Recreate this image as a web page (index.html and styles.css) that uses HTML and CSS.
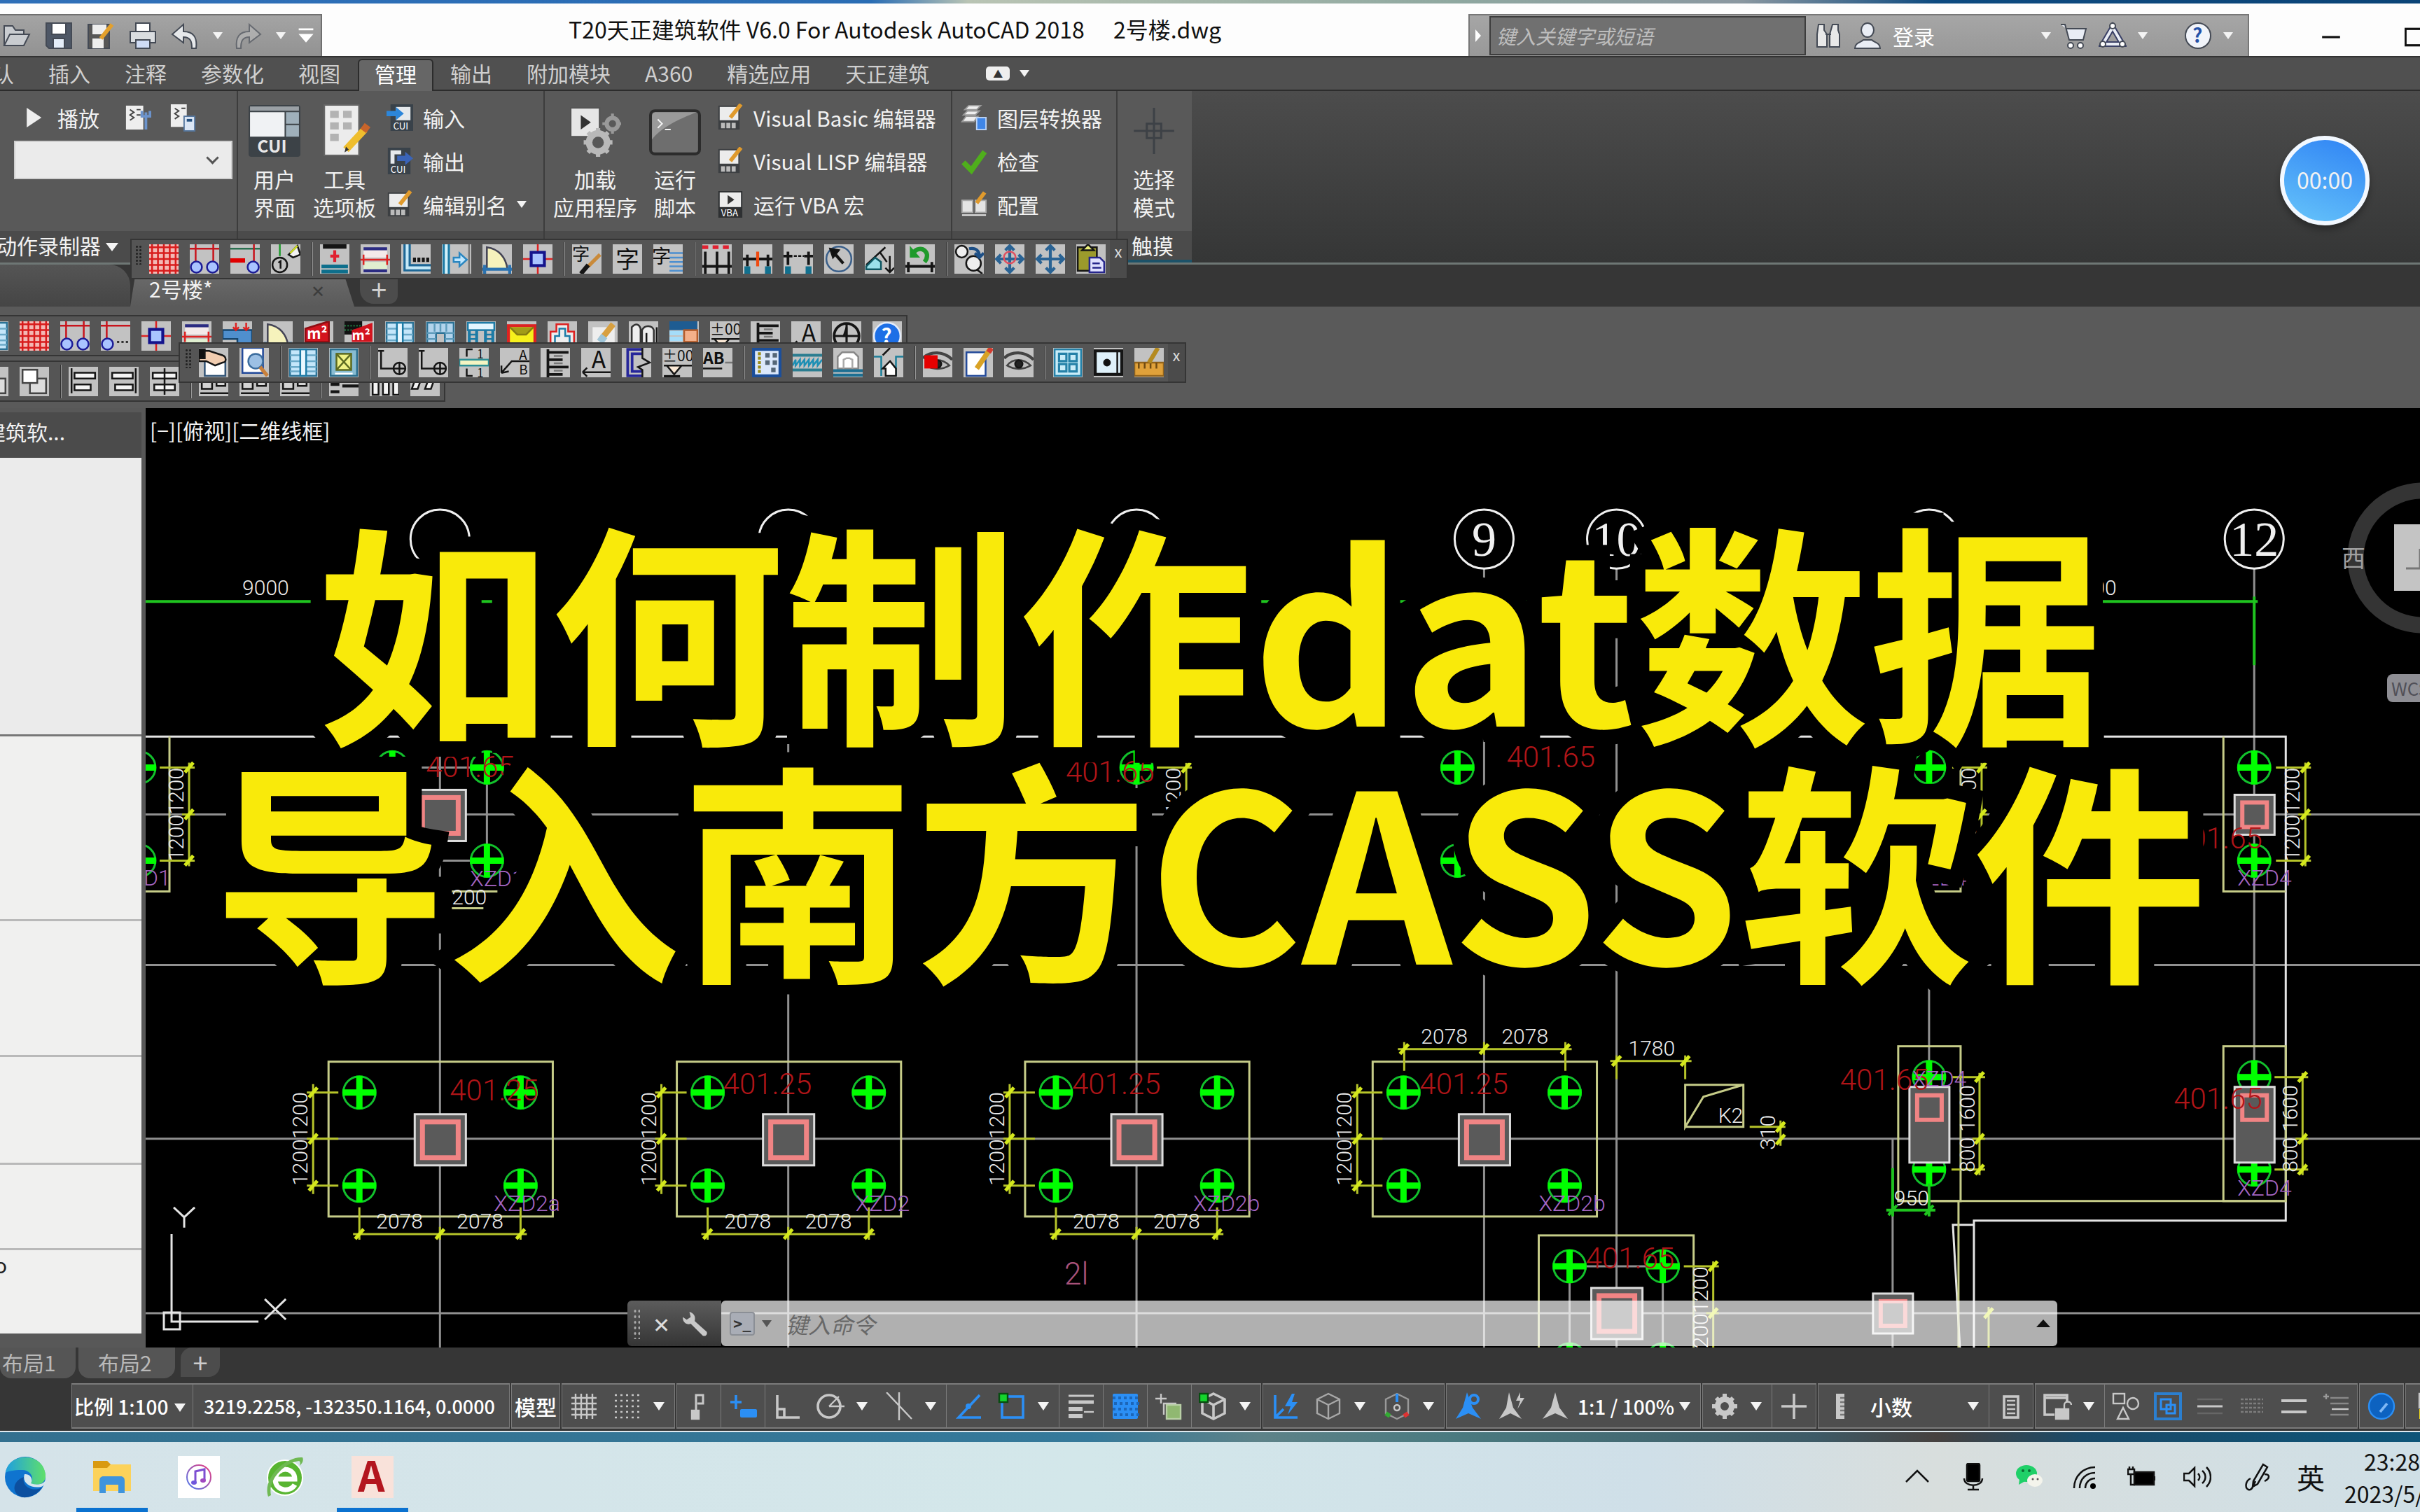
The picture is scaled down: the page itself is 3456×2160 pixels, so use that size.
FILE: index.html
```
<!DOCTYPE html>
<html lang="zh-CN">
<head>
    <meta charset="UTF-8">
    <meta name="viewport" content="width=device-width, initial-scale=1.0">
    <title>T20天正建筑软件 V6.0 - 2号楼.dwg</title>
    <link rel="stylesheet" href="styles.css">
</head>
<body>
    <!-- Icon sprite -->
    <svg class="sprite" aria-hidden="true">
        <symbol id="i-grid" viewBox="0 0 20 20"><rect width="20" height="20" fill="#f3b8b4" stroke="none"/><path d="M2 0v20M6 0v20M10 0v20M14 0v20M18 0v20M0 2h20M0 6h20M0 10h20M0 14h20M0 18h20" stroke="#d81c1c"/></symbol>
        <symbol id="i-pile2" viewBox="0 0 20 20"><path d="M0 3h20M4 0v12M16 0v12" stroke="#c8141c"/><g fill="#a9c4ff" stroke="#1c1c96"><circle cx="4.500" cy="15.500" r="3.800"/><circle cx="15.500" cy="15.500" r="3.800"/></g></symbol>
        <symbol id="i-pile1" viewBox="0 0 20 20"><path d="M0 3h20" stroke="#2a7050"/><path d="M16 0v12" stroke="#c8141c"/><path d="M0 11h10" stroke="#e00000" stroke-width="3"/><circle cx="15.500" cy="15.500" r="3.800" fill="#a9c4ff" stroke="#1c1c96"/></symbol>
        <symbol id="i-piledots" viewBox="0 0 20 20"><path d="M0 3h20M4 0v12" stroke="#c8141c"/><circle cx="4.500" cy="15.500" r="3.800" fill="#a9c4ff" stroke="#1c1c96"/><path d="M11 14h9" stroke-dasharray="1.500 1.500"/></symbol>
        <symbol id="i-axisnum" viewBox="0 0 20 20"><path d="M6 0v8" stroke="#1f9a2c"/><circle cx="6" cy="14" r="5"/><path d="M5 12.500l1.500-1v5"/><path d="M18 1l-6 6 3 2 5-2z" fill="#f2f2f2"/><path d="M18 1l-5 5" stroke="#cddc20"/></symbol>
        <symbol id="i-wallup" viewBox="0 0 20 20"><path d="M2 1.500h16" stroke-width="3"/><path d="M10 4v8M7 8h6" stroke="#e02030" stroke-width="2"/><path d="M1 15h18M1 18.500h18" stroke="#0e6f8c" stroke-width="2.500"/></symbol>
        <symbol id="i-dimwall" viewBox="0 0 20 20"><rect x="2" y="4" width="16" height="5" fill="#f4eaea" stroke="none"/><rect x="2" y="12" width="16" height="5" fill="#e0efd0" stroke="none"/><path d="M2 3h16M2 18h16" stroke="#2b2b82" stroke-width="2"/><path d="M0 10.500h20M2 7v7M18 7v7" stroke="#d22"/></symbol>
        <symbol id="i-corner" viewBox="0 0 20 20"><path d="M4 0v16h16" stroke="#1d6796" stroke-width="5"/><path d="M4 0v16h16" stroke="#c5e9f8" stroke-width="2"/><path d="M8 10.500h12" stroke-width="3" stroke-dasharray="2 1"/></symbol>
        <symbol id="i-wallright" viewBox="0 0 20 20"><path d="M3 0v20" stroke="#1d7ba6" stroke-width="5"/><path d="M3 0v20" stroke="#d3f1fa" stroke-width="2"/><path d="M8 9h4V6l5 4.500-5 4.500v-3H8z" fill="#bfe7ff" stroke="#2a86c0"/><path d="M18.500 0v20" stroke="#777"/></symbol>
        <symbol id="i-door" viewBox="0 0 20 20"><path d="M3 17V2c8 1 13 7 14 15z" fill="#f6f2bc" stroke="#445"/><path d="M0 17h20M1.500 14v6M18.500 14v6" stroke="#2a72b0" stroke-width="2"/></symbol>
        <symbol id="i-column" viewBox="0 0 20 20"><path d="M10 0v20M0 10h20" stroke="#d22"/><rect x="5.500" y="5.500" width="9" height="9" fill="#a9c4ff" stroke="#14148c" stroke-width="2"/></symbol>
        <symbol id="i-textbrush" viewBox="0 0 20 20"><text x="0" y="11" font-size="12">字</text><path d="M19 7l-8 8" stroke="#c98a3a" stroke-width="2.500"/><path d="M11 14l-5 6" stroke-width="3"/></symbol>
        <symbol id="i-text" viewBox="0 0 20 20"><text x="2" y="16" font-size="16">字</text></symbol>
        <symbol id="i-textlines" viewBox="0 0 20 20"><path d="M11 6h9M11 9h9M11 12h9M11 15h9M11 18h9" stroke="#4c8fd0"/><text x="-1" y="13" font-size="13">字</text></symbol>
        <symbol id="i-dima" viewBox="0 0 20 20"><path d="M0 2h20" stroke="#e02030" stroke-width="2.500" stroke-dasharray="4 3"/><path d="M2 5v15M10 5v15M18 5v15M0 15h20" stroke-width="1.800"/></symbol>
        <symbol id="i-dimb" viewBox="0 0 20 20"><path d="M0 10h20M3 7v8M17 7v8" stroke-width="1.800"/><path d="M10 5v10" stroke="#f04a10" stroke-width="2"/><path d="M3 15v5M17 15v5" stroke="#12708e" stroke-width="4"/></symbol>
        <symbol id="i-dimc" viewBox="0 0 20 20"><path d="M0 8h6M14 8h6M3 5v9M17 5v9" stroke-width="1.800"/><path d="M7 8h7" stroke-dasharray="2 1"/><path d="M3 15v5M17 15v5" stroke="#12708e" stroke-width="4"/></symbol>
        <symbol id="i-dimcircle" viewBox="0 0 20 20"><circle cx="10" cy="10" r="8.500" stroke="#3a5f8a"/><path d="M13 13L6 5" stroke-width="2"/><path d="M4 3l6 1-4 5z" fill="#111"/></symbol>
        <symbol id="i-slope" viewBox="0 0 20 20"><path d="M1 14L14 2M10 5l5 7"/><path d="M1 15l6-6 4 3v5H1z" fill="#9be0ea" stroke="#0f5762"/><path d="M17 8v11M14 16l3 3 3-3"/></symbol>
        <symbol id="i-undo" viewBox="0 0 20 20"><path d="M0 15h20M2 12v7M18 12v7" stroke-width="1.800"/><path d="M6 5c5-5 12 1 7 7" stroke="#1f9a2c" stroke-width="3"/><path d="M3 1v8h7z" fill="#1f9a2c" stroke="none"/></symbol>
        <symbol id="i-swap" viewBox="0 0 20 20"><circle cx="5" cy="5" r="4" fill="#eee"/><circle cx="13" cy="13" r="5" fill="#eee"/><path d="M10 3c5-1 7 2 7 5M14 6l3 3 3-3" stroke="#1d4f86" stroke-width="2"/><path d="M15 17l4 3"/></symbol>
        <symbol id="i-move" viewBox="0 0 20 20"><path d="M10 2v16M2 10h16M7 4l3-3 3 3M7 16l3 3 3-3M4 7l-3 3 3 3M16 7l3 3-3 3" stroke="#2a6394" stroke-width="2"/></symbol>
        <symbol id="i-movered" viewBox="0 0 20 20"><path d="M10 2v16M2 10h16M7 4l3-3 3 3M7 16l3 3 3-3M4 7l-3 3 3 3M16 7l3 3-3 3" stroke="#2a6394" stroke-width="2"/><circle cx="10" cy="9" r="4" stroke="#e05060"/></symbol>
        <symbol id="i-paste" viewBox="0 0 20 20"><rect x="1" y="2" width="13" height="16" fill="#9c9a2c"/><path d="M4 4l4-4 4 4z" fill="#eef27a"/><path d="M9 9h7l3 3v7H9z" fill="#dfe0ff" stroke="#26268c"/><path d="M11 13h5M11 16h6" stroke="#26268c"/></symbol>
        <symbol id="i-layers" viewBox="0 0 20 20"><rect x="7" y="8" width="11" height="10" fill="#ddd" stroke="#444"/><rect x="2" y="2" width="10" height="9" fill="#fff" stroke="#444"/></symbol>
        <symbol id="i-wall2" viewBox="0 0 20 20"><path d="M0 6h20v12H10v-6H0z" fill="#4f8fce" stroke="#17466e"/><path d="M9 1v5M16 1v5M7 4l2 2 2-2M14 4l2 2 2-2" stroke="#d22"/></symbol>
        <symbol id="i-m2" viewBox="0 0 20 20"><path d="M1 5L17 0v14H1z" fill="#d3141e" stroke="#8e0d12"/><text class="w" x="2" y="12" font-size="10" font-weight="700">m²</text></symbol>
        <symbol id="i-m2d" viewBox="0 0 20 20"><rect width="12" height="9" fill="#111" stroke="none"/><path d="M0 3h12M0 6h12" stroke="#1c6a38" stroke-dasharray="1 1"/><path d="M5 6l14-5v13H5z" fill="#d3141e" stroke="none"/><text class="w" x="5" y="13" font-size="9" font-weight="700">m²</text></symbol>
        <symbol id="i-stairs" viewBox="0 0 20 20"><rect x="1" y="1" width="18" height="18" fill="#c4e6fa" stroke="#2b7296"/><path d="M1 5h18M1 9h18M1 13h18M1 16h18" stroke="#6aa9c8"/><rect x="8" y="1" width="4" height="18" fill="#eaf8ff" stroke="#1d7ba6"/></symbol>
        <symbol id="i-stairu" viewBox="0 0 20 20"><path d="M1 20V1h18v19h-6V8H7v12z" fill="#b2d4ec" stroke="#2b7296"/><path d="M1 8h6M1 12h6M1 16h6M13 8h6M13 12h6M13 16h6M6 1v6M10 1v6M14 1v6" stroke="#5f9cbc"/></symbol>
        <symbol id="i-stair3" viewBox="0 0 20 20"><rect x="1" y="1" width="18" height="5" fill="#e3f6ff" stroke="#1d7ba6"/><path d="M2 6v14M7 6v14M13 6v14M18 6v14" stroke="#1d7ba6" stroke-width="2"/><path d="M2 9h5M2 12h5M13 9h5M13 12h5" stroke="#1d7ba6"/></symbol>
        <symbol id="i-roof" viewBox="0 0 20 20"><rect x="1" y="3" width="18" height="15" fill="#f6f01c" stroke="#d22" stroke-width="2"/><path d="M2 4l5 5h6l5-5" fill="#a29c18" stroke="#857c10"/></symbol>
        <symbol id="i-footprint" viewBox="0 0 20 20"><path d="M6 2h8v5h4v11H2V7h4z" stroke="#d22" fill="#eee"/><path d="M8 5h4v5h3v6H5v-6h3z" stroke="#1d7ba6"/></symbol>
        <symbol id="i-eraser" viewBox="0 0 20 20"><rect x="3" y="4" width="15" height="14" fill="#eee" stroke="none"/><path d="M17 2L9 12" stroke="#d8a040" stroke-width="4"/><path d="M11 10l-3 4" stroke="#9fc5d8" stroke-width="5"/></symbol>
        <symbol id="i-books" viewBox="0 0 20 20"><path d="M2 4c3-3 5-2 6 1v14H2zM9 6c2-4 7-3 8 0v13H9z" fill="#eee" stroke="#333"/><path d="M12 8v9M19 4v15"/></symbol>
        <symbol id="i-table" viewBox="0 0 20 20"><rect width="19" height="6" fill="#1e5c92" stroke="none"/><path d="M0 8h9M0 12h9M0 16h9" stroke="#a5ddfa" stroke-width="3"/><rect x="10" y="6" width="9" height="8" fill="#f3b08a" stroke="#b35d2c"/></symbol>
        <symbol id="i-level" viewBox="0 0 20 20"><text x="0" y="9" font-size="10">±00</text><path d="M1 12h19M3 12l5 6 5-6z" fill="#fbe9d6"/><path d="M1 19.500h11" stroke-width="2"/></symbol>
        <symbol id="i-scalee" viewBox="0 0 20 20"><path d="M5 1v19M5 3h14M5 8h10M5 13h14M5 18h10" stroke-width="1.800"/><path d="M9 5.500h6M9 10.500h6M9 15.500h6" stroke="#777"/></symbol>
        <symbol id="i-leadera" viewBox="0 0 20 20"><text x="7" y="14" font-size="16">A</text><path d="M1 16.500h19M1 16.500l3-3M1 16.500l3 3"/></symbol>
        <symbol id="i-compass" viewBox="0 0 20 20"><circle cx="10" cy="10" r="8.500" stroke-width="1.800"/><path d="M10 1v18M2 10h16" stroke-width="1.500"/><path d="M10 4l-2 6h2z" fill="#222"/></symbol>
        <symbol id="i-help" viewBox="0 0 20 20"><circle cx="10" cy="10" r="9" fill="#1d6fe6" stroke="#e4ecfa"/><text class="w" x="6" y="15" font-size="14" font-weight="700">?</text></symbol>
        <symbol id="i-hand" viewBox="0 0 20 20"><rect x="4" y="9" width="14" height="10" fill="#fff" stroke="#357"/><path d="M0 2h7l9 3c3 1 3 5 0 5l-5 2-6-3H0z" fill="#f1cdb0"/><path d="M0 1h4v6H0z" fill="#111"/></symbol>
        <symbol id="i-find" viewBox="0 0 20 20"><rect x="2" y="0" width="14" height="17" fill="#fff" stroke="#234a9a"/><circle cx="11" cy="9" r="5" fill="#9cc0e4" stroke="#3c6d9e"/><path d="M14 13l5 6" stroke="#c9813c" stroke-width="2.500"/></symbol>
        <symbol id="i-lift" viewBox="0 0 20 20"><rect x="1" y="1" width="18" height="18" fill="#88bcd2" stroke="#2a6e8e"/><rect x="5" y="4" width="10" height="11" fill="#f0f386" stroke="#5c6a20"/><path d="M5 4l10 11M15 4L5 15" stroke="#5c6a20"/><path d="M4 17.500h12" stroke="#fff"/></symbol>
        <symbol id="i-leadc" viewBox="0 0 20 20"><path d="M2 2v12h9M0 2h4"/><circle cx="14.500" cy="14" r="4"/><path d="M10 14h9M14.500 10v8"/></symbol>
        <symbol id="i-section" viewBox="0 0 20 20"><rect x="0" y="8" width="20" height="4" fill="#f5f5c2" stroke="#2c8f96"/><path d="M5 6V1h4M5 14v5h4"/><text x="12" y="7" font-size="8">1</text><text x="12" y="20" font-size="8">1</text></symbol>
        <symbol id="i-ab" viewBox="0 0 20 20"><path d="M1 17L8 9h12M1 17v-5M1 17l5-1"/><text x="13" y="8" font-size="9">A</text><text x="13" y="18" font-size="9">B</text></symbol>
        <symbol id="i-break" viewBox="0 0 20 20"><path d="M14 1H4v18h10M14 4H7v12h7" stroke="#26269a" stroke-width="1.800"/><path d="M14 0v7l5 3-8 3 3 2v5"/></symbol>
        <symbol id="i-abt" viewBox="0 0 20 20"><text x="0" y="11" font-size="11" font-weight="700">AB</text><path d="M0 14h13"/><path d="M15 10h5" stroke="#777"/></symbol>
        <symbol id="i-panel" viewBox="0 0 20 20"><rect x="1" y="1" width="18" height="18" fill="#dbe8fb" stroke="#1c4f9a" stroke-width="2"/><path d="M5 3v14" stroke="#9a8c16" stroke-width="2" stroke-dasharray="2 1"/><path d="M9 5h3M14 5h3M9 10h3M14 10h3M13 15h3" stroke="#567" stroke-width="3"/></symbol>
        <symbol id="i-wave" viewBox="0 0 20 20"><path d="M0 5h20M0 15h20" stroke="#2b7d90" stroke-width="2"/><path d="M0 12l2-4v4l3-4v4l3-4v4l3-4v4l3-4v4l3-4v4l3-4" stroke="#1d8fb4"/></symbol>
        <symbol id="i-wc" viewBox="0 0 20 20"><path d="M3 14V6l3-3h8l3 3v8z" fill="#fff" stroke="#888"/><path d="M7 14V8l2-1h2l2 1v6" stroke="#aaa"/><path d="M0 15.500h20M0 18.500h20" stroke="#1c6f92" stroke-width="2"/></symbol>
        <symbol id="i-hut" viewBox="0 0 20 20"><path d="M0 6h5v13M20 6h-5v13" stroke="#1c7f9a"/><path d="M6 5l5-5"/><path d="M6 14l5-5 4 5v5H8v-5z" fill="#fff"/></symbol>
        <symbol id="i-eye" viewBox="0 0 20 20"><path d="M0 7C5 2 14 2 20 8" stroke="#444" stroke-width="2"/><path d="M2 12c4-5 11-5 16 0-5 3-11 3-16 0z" fill="#bbb" stroke="#444"/><circle cx="10" cy="11" r="2.500" fill="#222"/></symbol>
        <symbol id="i-note" viewBox="0 0 20 20"><rect x="2" y="3" width="13" height="16" fill="#fff" stroke="#234a9a"/><path d="M18 1L9 14" stroke="#d9a226" stroke-width="3.500"/><path d="M19 0l-2 3" stroke="#d43c30" stroke-width="3.500"/></symbol>
        <symbol id="i-win4" viewBox="0 0 20 20"><rect x="1" y="1" width="18" height="18" fill="#c9ecf8" stroke="#2581a8"/><path d="M4 4h5v5H4zM11 4h5v5h-5zM4 11h5v5H4zM11 11h5v5h-5z" stroke="#2581a8" stroke-width="1.500"/></symbol>
        <symbol id="i-sheet" viewBox="0 0 20 20"><rect x="1" y="2" width="18" height="16" fill="#dff1fa" stroke-width="2"/><path d="M16 2v16"/><circle cx="9" cy="10" r="2" fill="#111"/></symbol>
        <symbol id="i-ruler" viewBox="0 0 20 20"><path d="M0 10h20v9H0z" fill="#e0a13a" stroke="#94641a"/><path d="M3 10v4M7 10v4M11 10v4M15 10v4" stroke="#704b12"/><path d="M16 0l-6 10" stroke="#b48a20" stroke-width="3"/></symbol>
        <symbol id="i-aleft" viewBox="0 0 20 20"><path d="M2 1v17"/><path d="M4 4h14v4H4zM4 12h11v4H4z" fill="#f4f4f4"/></symbol>
        <symbol id="i-aright" viewBox="0 0 20 20"><path d="M18 1v17"/><path d="M2 4h14v4H2zM4 12h12v4H4z" fill="#f4f4f4"/></symbol>
        <symbol id="i-acenter" viewBox="0 0 20 20"><path d="M2 4h16v4H2zM3 12h14v4H3z" fill="#f4f4f4"/><path d="M10 1v18"/></symbol>
        <symbol id="i-abase" viewBox="0 0 20 20"><path d="M1 18h19"/><path d="M2 5h7v10H2zM12 5h6v8h-6z" fill="#d4d4d4"/></symbol>
        <symbol id="i-alist" viewBox="0 0 20 20"><path d="M1 6h6M1 12h6M1 17h6M9 13h11" stroke-width="2"/></symbol>
        <symbol id="i-acols" viewBox="0 0 20 20"><path d="M2 1v18h4V1zM9 1v18h4V1zM16 1v18h4V1z" fill="#f4f4f4"/></symbol>
        <symbol id="i-aslant" viewBox="0 0 20 20"><path d="M1 15l5-14h4L5 15zM10 15l5-14h4l-5 14z" fill="#f4f4f4"/></symbol>
        <!-- small ribbon glyphs -->
        <symbol id="i-cuiin" viewBox="0 0 20 20"><rect x="3" width="17" height="20" fill="#39424a" stroke="none"/><rect x="7" y="2" width="11" height="10" fill="#e5e9ec" stroke="none"/><path d="M0 5h7V2l6 5-6 5V9H0z" fill="#2c86da" stroke="none"/><text class="w" x="5" y="19" font-size="7">CUI</text></symbol>
        <symbol id="i-cuiout" viewBox="0 0 20 20"><rect x="1" width="17" height="20" fill="#39424a" stroke="none"/><path d="M3 2h8v3H6v7H3z" fill="#e5e9ec" stroke="none"/><path d="M8 6h6V3l6 5-6 5v-3H8z" fill="#3a64b8" stroke="none"/><text class="w" x="3" y="19" font-size="7">CUI</text></symbol>
        <symbol id="i-script" viewBox="0 0 20 20"><rect x="1" y="1" width="16" height="18" fill="#3c3f42" stroke="none"/><rect x="2" y="2" width="14" height="10" fill="#ececec" stroke="none"/><path d="M18 0l-8 10" stroke="#e09a2c" stroke-width="3"/><path d="M3 16h12" stroke="#bbb" stroke-width="4" stroke-dasharray="3 1"/></symbol>
        <symbol id="i-vba" viewBox="0 0 20 20"><rect x="1" width="18" height="20" fill="#2e3032" stroke="none"/><rect x="2" y="1" width="16" height="11" fill="#ececec" stroke="none"/><path d="M8 3v7l5-3.500z" fill="#333" stroke="none"/><text class="w" x="3" y="19" font-size="7">VBA</text></symbol>
        <symbol id="i-conv" viewBox="0 0 20 20"><path d="M3 4l3-3h9l-3 3zM2 8l3-3h9l-3 3zM1 13l3-4h9l-3 4z" fill="#eee" stroke="#999"/><rect x="12" y="10" width="7" height="9" fill="#3f86e8" stroke="#bcd4f6"/></symbol>
        <symbol id="i-check" viewBox="0 0 20 20"><path d="M2 11l6 6L18 3" stroke="#4fae1c" stroke-width="4"/></symbol>
        <symbol id="i-config" viewBox="0 0 20 20"><path d="M1 7h8v9H1zM11 7h8v9h-8z" fill="#e4e4e4" stroke="#aaa"/><path d="M18 1l-6 8" stroke="#e09a2c" stroke-width="3"/><path d="M1 18h18" stroke="#eee"/></symbol>
        <symbol id="i-pref" viewBox="0 0 20 20"><rect x="1" y="1" width="13" height="18" fill="#eee" stroke="none"/><path d="M4 4l3 2-3 2 3 2-3 2M9 4h3M9 8h3" stroke="#444"/><path d="M16 6v13M13 5v4h6V5" stroke="#6b93cc" stroke-width="2"/></symbol>
        <symbol id="i-calcsheet" viewBox="0 0 20 20"><rect x="1" y="0" width="12" height="17" fill="#eee" stroke="none"/><path d="M4 3l3 2-3 2 3 2-3 2M9 3h3" stroke="#444"/><rect x="11" y="9" width="8" height="11" fill="#dbe6f5" stroke="#56779f"/><path d="M13 12h4" stroke="#25507f" stroke-width="2"/></symbol>
        <!-- status bar glyphs -->
        <symbol id="s-grid" viewBox="0 0 20 20"><path d="M4 1v18M8 1v18M12 1v18M16 1v18M1 4h18M1 8h18M1 12h18M1 16h18"/></symbol>
        <symbol id="s-dots" viewBox="0 0 20 20"><path d="M1 2h18M1 6h18M1 10h18M1 14h18M1 18h18" stroke-dasharray="1.500 2.500"/></symbol>
        <symbol id="s-infer" viewBox="0 0 20 20"><path d="M8 14V2h5v6h-4" stroke-width="1.500"/><rect x="5" y="13" width="5" height="6" fill="#c8c8c8"/></symbol>
        <symbol id="s-dyn" viewBox="0 0 20 20"><path d="M5 2v10M1 7h8" stroke="#2b8ff5" stroke-width="1.800"/><rect x="8" y="12" width="12" height="6" rx="1" fill="#2b8ff5" stroke="none"/></symbol>
        <symbol id="s-ortho" viewBox="0 0 20 20"><path d="M3 2v16h16M3 12h5v6" stroke-width="1.800"/></symbol>
        <symbol id="s-polar" viewBox="0 0 20 20"><circle cx="9" cy="10" r="8" stroke-width="1.800"/><path d="M9 10h11M9 10l7-7"/></symbol>
        <symbol id="s-iso" viewBox="0 0 20 20"><path d="M10 -1v22M1 0l18 19"/></symbol>
        <symbol id="s-track" viewBox="0 0 20 20"><path d="M18 2L3 18h16" stroke="#2b8ff5" stroke-width="1.800"/><circle cx="10" cy="10" r="2" fill="#2b8ff5" stroke="none"/></symbol>
        <symbol id="s-snap" viewBox="0 0 20 20"><rect x="3" y="3" width="15" height="15" stroke="#2b8ff5" stroke-width="1.800"/><rect x="1" y="1" width="6" height="6" fill="#14d62c" stroke="#074d10"/></symbol>
        <symbol id="s-lwt" viewBox="0 0 20 20"><path d="M1 2.500h18" stroke-width="1.500"/><path d="M1 7h18" stroke-width="2.500"/><path d="M1 12h10M1 17h10" stroke-width="3"/><path d="M12 14h7"/></symbol>
        <symbol id="s-trans" viewBox="0 0 20 20"><rect x="1" y="1" width="18" height="18" rx="1" fill="#2b8ff5" stroke="none"/><path d="M1 4h18M2 8h18M1 12h18M2 16h18" stroke="#1c66b8" stroke-width="2" stroke-dasharray="2 2"/></symbol>
        <symbol id="s-cycle" viewBox="0 0 20 20"><path d="M4 1v7M0 4.500h8M6 16V8h9"/><rect x="8" y="9" width="10" height="10" fill="#90b871" stroke="#b9cfa6"/></symbol>
        <symbol id="s-cube" viewBox="0 0 20 20"><path d="M10 1l8 4v10l-8 4-8-4V5zM2 5l8 4 8-4M10 9v10" stroke="#a8a8a8" stroke-width="1.200"/></symbol>
        <symbol id="s-cubes" viewBox="0 0 20 20"><path d="M10 1l8 4v10l-8 4-8-4V5zM2 5l8 4 8-4M10 9v10" stroke-width="1.800"/><rect x="0" y="1" width="6" height="6" fill="#14d62c" stroke="#074d10"/></symbol>
        <symbol id="s-ucs" viewBox="0 0 20 20"><path d="M3 2v16h16M3 18l6-6" stroke="#2b8ff5" stroke-width="1.800"/><path d="M15 1l-5 9h4l-2 6 7-9h-4l2-6z" fill="#2b8ff5" stroke="none"/></symbol>
        <symbol id="s-gizmo" viewBox="0 0 20 20"><path d="M10 1l8 4v10l-8 4-8-4V5z" stroke="#999"/><path d="M10 1v6" stroke="#2b8ff5" stroke-width="2"/><path d="M2 15l3 2" stroke="#3a3" stroke-width="3"/><path d="M18 15l-3 2" stroke="#d33" stroke-width="3"/><circle cx="10" cy="11" r="2"/></symbol>
        <symbol id="s-ann" viewBox="0 0 20 20"><path d="M10 0l3 11 6 8-9-4-9 4 6-8z" fill="#c8c8c8" stroke="none"/></symbol>
        <symbol id="s-annvis" viewBox="0 0 20 20"><path d="M9 0l4 11 6 8-9-4-9 4 5-8z" fill="#2b8ff5" stroke="none"/><circle cx="14" cy="5" r="3" stroke="#2b8ff5" stroke-width="2"/></symbol>
        <symbol id="s-annauto" viewBox="0 0 20 20"><path d="M8 0l3 11 6 8-8-4-8 4 5-8z" fill="#c8c8c8" stroke="none"/><path d="M16 0l-3 6h3l-2 6 5-8h-3z" fill="#c8c8c8" stroke="none"/></symbol>
        <symbol id="s-gear" viewBox="0 0 20 20"><circle cx="10" cy="10" r="5" stroke-width="4"/><path d="M10 1v4M10 15v4M1 10h4M15 10h4M4 4l2.500 2.500M13.500 13.500L16 16M16 4l-2.500 2.500M6.500 13.500L4 16" stroke-width="3"/></symbol>
        <symbol id="s-plus" viewBox="0 0 20 20"><path d="M10 1v18M1 10h18" stroke-width="1.800"/></symbol>
        <symbol id="s-rule" viewBox="0 0 20 20"><rect x="7" y="1" width="6" height="18" fill="#c8c8c8" stroke="none"/><path d="M10 4h3M10 7h3M10 10h3M10 13h3M10 16h3" stroke="#777"/></symbol>
        <symbol id="s-calc" viewBox="0 0 20 20"><rect x="5" y="3" width="10" height="15" stroke-width="1.800"/><path d="M7 6h6M7 9h6M7 12h6M7 15h6"/></symbol>
        <symbol id="s-lock" viewBox="0 0 20 20"><path d="M8 16H1V2h16v5M1 4h16" stroke-width="1.800"/><rect x="9" y="12" width="9" height="7" fill="#c8c8c8"/><path d="M15 12V9c0-3 5-3 5 0"/></symbol>
        <symbol id="s-shapes" viewBox="0 0 20 20"><rect x="1" y="1" width="8" height="7"/><circle cx="15" cy="8" r="4"/><path d="M8 11l4 8H4z"/></symbol>
        <symbol id="s-hw" viewBox="0 0 20 20"><rect x="1" y="1" width="18" height="18" stroke="#2b7fd0" stroke-width="2"/><path d="M5 5h7v7H5zM9 9h6v6H9z" stroke="#2b8ff5" stroke-width="1.500"/></symbol>
        <symbol id="s-line1" viewBox="0 0 20 20"><path d="M1 5h18M1 15h18" stroke="#666"/><path d="M1 10h18" stroke-width="1.500"/></symbol>
        <symbol id="s-hatch" viewBox="0 0 20 20"><path d="M2 5h16M2 8h16M2 11h16M2 14h16" stroke="#7d7d7d" stroke-dasharray="2 1"/></symbol>
        <symbol id="s-line2" viewBox="0 0 20 20"><path d="M1 6h18M1 14h18" stroke-width="2"/></symbol>
        <symbol id="s-line3" viewBox="0 0 20 20"><path d="M6 4h13M6 8h13M6 16h13" stroke="#888"/><path d="M7 12h12"/><path d="M3 1v4M1 3h4" stroke="#999"/></symbol>
        <symbol id="s-perf" viewBox="0 0 20 20"><circle cx="10" cy="10" r="9" fill="#0d62c0" stroke="#2b8ff5"/><path d="M9 14l5-6" stroke="#7fb8f5" stroke-width="1.800"/></symbol>
        <symbol id="s-msg" viewBox="0 0 20 20"><path d="M4 1h12v10H4z" fill="#eee"/><path d="M4 12h14v7H4z" fill="#f2dc1c" stroke="none"/></symbol>
    </svg>

    <div class="desktop-edge"></div>

    <header class="titlebar">
        <div class="quick-access">
            <button class="qa" aria-label="打开"><svg viewBox="0 0 20 20"><path d="M1 17V3h6l2 3h6v3M1 17l4-8h14l-4 8z" fill="#c9ccd0"/></svg></button>
            <button class="qa" aria-label="保存"><svg viewBox="0 0 20 20"><path d="M1 1h18v18H3l-2-2z" fill="#4e5766"/><path d="M5 1h10v8H5z" fill="#fff"/><path d="M6 12h8v7H6z" fill="#e5eefa"/></svg></button>
            <button class="qa" aria-label="另存为"><svg viewBox="0 0 20 20"><path d="M1 2h15v17H1z" fill="#575757"/><path d="M4 2h10v7H4zM4 12h8v7H4z" fill="#eee" stroke="none"/><path d="M18 2l-8 10" stroke="#e3a02c" stroke-width="3"/></svg></button>
            <button class="qa" aria-label="打印"><svg viewBox="0 0 20 20"><path d="M5 1h10v7H5z" fill="#fff"/><path d="M1 7h18v8H1z" fill="#dadde0"/><path d="M5 13h10v6H5z" fill="#cfdcf5"/></svg></button>
            <button class="qa" aria-label="放弃"><svg viewBox="0 0 20 20"><path d="M9 2L1 9l8 6v-4c5 0 6 3 6 8h3C19 11 16 7 9 7z" fill="#e6e8ea"/></svg></button>
            <i class="caret"></i>
            <button class="qa dim" aria-label="重做"><svg viewBox="0 0 20 20"><path d="M11 2l8 7-8 6v-4c-5 0-6 3-6 8H2C1 11 4 7 11 7z" fill="#bbb"/></svg></button>
            <i class="caret"></i>
            <button class="qa more" aria-label="自定义快速访问工具栏"><svg viewBox="0 0 20 20"><path d="M2 3h16M4 9h12l-6 7z"/></svg></button>
        </div>
        <h1 class="window-title">T20天正建筑软件 V6.0 For Autodesk AutoCAD 2018 <span>2号楼.dwg</span></h1>
        <div class="infocenter">
            <i class="caret caret-right"></i>
            <input class="search" type="text" placeholder="键入关键字或短语" aria-label="搜索">
            <button class="ic" aria-label="搜索"><svg viewBox="0 0 20 20"><path d="M3 2h4v4l2 3v9H2V9zM13 2h4v4l1 3v9h-7V9zM8 9h4" fill="#e8e8e8"/></svg></button>
            <button class="ic" aria-label="用户"><svg viewBox="0 0 20 20"><ellipse cx="10" cy="6" rx="4.500" ry="5" fill="#e9edf5"/><path d="M1 19c0-4 4-4 6-6h6c2 2 6 2 6 6z" fill="#e9edf5"/></svg></button>
            <a class="login" href="#">登录</a>
            <i class="caret"></i>
            <button class="ic" aria-label="商店"><svg viewBox="0 0 20 20"><path d="M1 2h3l3 11h10l2-8H5" fill="#e9edf5"/><circle cx="8" cy="17" r="2" fill="#fff"/><circle cx="15" cy="17" r="2" fill="#fff"/></svg></button>
            <button class="ic" aria-label="A360"><svg viewBox="0 0 20 20"><path d="M10 4L3 16h14z" fill="none" stroke-width="4" stroke="#3a4066"/><path d="M10 4L3 16h14z" fill="none" stroke="#e9edf5" stroke-width="2"/><circle cx="10" cy="3" r="2" fill="#fff"/><circle cx="3" cy="16" r="2" fill="#fff"/><circle cx="17" cy="16" r="2" fill="#fff"/></svg></button>
            <i class="caret"></i>
            <button class="ic help" aria-label="帮助"><svg viewBox="0 0 20 20"><circle cx="10" cy="10" r="9" fill="#f1f4fa"/><text x="6" y="15" font-size="14" font-weight="700" fill="#2452a8" stroke="none">?</text></svg></button>
            <i class="caret"></i>
        </div>
        <div class="window-buttons">
            <button aria-label="最小化"><svg viewBox="0 0 24 30"><path d="M0 15h24"/></svg></button>
            <button aria-label="最大化"><svg viewBox="0 0 24 30"><rect x="1" y="4" width="23" height="22"/></svg></button>
        </div>
    </header>

    <nav class="ribbon-tabs">
        <a href="#">默认</a>
        <a href="#">插入</a>
        <a href="#">注释</a>
        <a href="#">参数化</a>
        <a href="#">视图</a>
        <a href="#" class="active">管理</a>
        <a href="#">输出</a>
        <a href="#">附加模块</a>
        <a href="#">A360</a>
        <a href="#">精选应用</a>
        <a href="#">天正建筑</a>
        <button class="minimize" aria-label="最小化功能区">▲</button>
        <i class="caret"></i>
    </nav>

    <section class="ribbon">
        <div class="panel panel-recorder">
            <div class="panel-body stack">
                <div class="line">
                    <button class="row"><svg class="play" viewBox="0 0 20 20"><path d="M3 0l15 10L3 20z" fill="#eee"/></svg>播放</button>
                    <button class="row" aria-label="首选项"><svg><use href="#i-pref"/></svg></button>
                    <button class="row" aria-label="管理动作宏"><svg><use href="#i-calcsheet"/></svg></button>
                </div>
                <div class="macro"><select aria-label="动作宏"><option></option></select></div>
            </div>
            <div class="panel-title">动作录制器 <i class="caret"></i></div>
        </div>
        <div class="panel panel-custom">
            <div class="panel-body">
                <button class="big"><svg viewBox="0 0 36 36"><rect width="36" height="36" rx="2" fill="#3c4247"/><rect x="1" y="1" width="34" height="3" fill="#9aa0a5"/><rect x="1" y="5" width="24" height="17" fill="#f0f2f4"/><path d="M26 5h9v8h-9zM26 14h9v8h-9z" fill="#9fb0bb"/><text x="6" y="33" font-size="12" font-weight="700" fill="#e8e8e8">CUI</text></svg>用户<br>界面</button>
                <button class="big"><svg viewBox="0 0 36 36"><rect x="4" y="0" width="24" height="35" fill="#ececec" stroke="#666"/><path d="M8 4h6v5H8zM17 4h6v5h-6zM8 12h6v5H8zM17 12h6v5h-6zM8 20h6v5H8z" fill="#b3b3b3"/><path d="M32 17L19 31" stroke="#efbe2e" stroke-width="5"/><path d="M34 14l-3 4" stroke="#c8642a" stroke-width="5"/><path d="M18 33l1-4 2 2z" fill="#333"/></svg>工具<br>选项板</button>
                <div class="rows">
                    <button class="row"><svg><use href="#i-cuiin"/></svg>输入</button>
                    <button class="row"><svg><use href="#i-cuiout"/></svg>输出</button>
                    <button class="row"><svg><use href="#i-script"/></svg>编辑别名 <i class="caret"></i></button>
                </div>
            </div>
            <div class="panel-title"></div>
        </div>
        <div class="panel panel-apps">
            <div class="panel-body">
                <button class="big wide"><svg viewBox="0 0 36 36"><rect x="1" y="2" width="20" height="20" fill="#e6e6e6" stroke="#555"/><path d="M8 7v10l7-5z" fill="#333"/><circle cx="20" cy="26" r="6" fill="none" stroke="#b9b9b9" stroke-width="5"/><path d="M20 16v20M10 26h20M13 19l14 14M27 19L13 33" stroke="#b9b9b9" stroke-width="3"/><circle cx="20" cy="26" r="4" fill="#585858"/><circle cx="30" cy="13" r="4" fill="none" stroke="#999" stroke-width="3"/><path d="M30 6v3M30 17v3M23 13h3M34 13h3" stroke="#999" stroke-width="2"/></svg>加载<br>应用程序</button>
                <button class="big"><svg viewBox="0 0 36 36"><rect x="1" y="4" width="34" height="30" rx="3" fill="#6e6e6e" stroke="#2c2c2c" stroke-width="2"/><path d="M2 8c0-2 1-3 3-3h28C20 10 8 16 2 24z" fill="#9a9a9a"/><path d="M6 10l3 3-3 3M11 17h4" stroke="#f2f2f2" fill="none"/></svg>运行<br>脚本</button>
                <div class="rows">
                    <button class="row"><svg><use href="#i-script"/></svg>Visual Basic 编辑器</button>
                    <button class="row"><svg><use href="#i-script"/></svg>Visual LISP 编辑器</button>
                    <button class="row"><svg><use href="#i-vba"/></svg>运行 VBA 宏</button>
                </div>
            </div>
            <div class="panel-title"></div>
        </div>
        <div class="panel panel-std">
            <div class="panel-body">
                <div class="rows">
                    <button class="row"><svg><use href="#i-conv"/></svg>图层转换器</button>
                    <button class="row"><svg><use href="#i-check"/></svg>检查</button>
                    <button class="row"><svg><use href="#i-config"/></svg>配置</button>
                </div>
            </div>
            <div class="panel-title"></div>
        </div>
        <div class="panel panel-touch">
            <div class="panel-body">
                <button class="big"><svg viewBox="0 0 36 36"><path d="M18 2v32M4 18h28M13 13h10v10H13z" fill="none" stroke="#3d4146" stroke-width="1.500"/></svg>选择<br>模式</button>
            </div>
            <div class="panel-title">触摸</div>
        </div>
    </section>

    <div class="file-tabs">
        <div class="file-tab first"></div>
        <div class="file-tab current">2号楼*<button aria-label="关闭">✕</button></div>
        <button class="new-tab" aria-label="新建">+</button>
    </div>

    <div class="dock">
        <div class="toolbar docked">
            <button class="tool" aria-label="图层"><svg><use href="#i-stairs"/></svg></button>
            <button class="tool" aria-label="轴网"><svg><use href="#i-grid"/></svg></button>
            <button class="tool" aria-label="两点轴标"><svg><use href="#i-pile2"/></svg></button>
            <button class="tool" aria-label="逐点轴标"><svg><use href="#i-piledots"/></svg></button>
            <button class="tool" aria-label="柱"><svg><use href="#i-column"/></svg></button>
            <button class="tool" aria-label="墙厚"><svg><use href="#i-dimwall"/></svg></button>
            <button class="tool" aria-label="墙体"><svg><use href="#i-wall2"/></svg></button>
            <button class="tool" aria-label="门"><svg><use href="#i-door"/></svg></button>
            <button class="tool" aria-label="面积"><svg><use href="#i-m2"/></svg></button>
            <button class="tool" aria-label="查询面积"><svg><use href="#i-m2d"/></svg></button>
            <button class="tool" aria-label="双跑楼梯"><svg><use href="#i-stairs"/></svg></button>
            <button class="tool" aria-label="三跑楼梯"><svg><use href="#i-stairu"/></svg></button>
            <button class="tool" aria-label="多跑楼梯"><svg><use href="#i-stair3"/></svg></button>
            <button class="tool" aria-label="屋顶"><svg><use href="#i-roof"/></svg></button>
            <button class="tool" aria-label="散水"><svg><use href="#i-footprint"/></svg></button>
            <button class="tool" aria-label="擦除"><svg><use href="#i-eraser"/></svg></button>
            <button class="tool" aria-label="图库"><svg><use href="#i-books"/></svg></button>
            <button class="tool" aria-label="表格"><svg><use href="#i-table"/></svg></button>
            <button class="tool" aria-label="标高"><svg><use href="#i-level"/></svg></button>
            <button class="tool" aria-label="做法标注"><svg><use href="#i-scalee"/></svg></button>
            <button class="tool" aria-label="箭头引注"><svg><use href="#i-leadera"/></svg></button>
            <button class="tool" aria-label="指北针"><svg><use href="#i-compass"/></svg></button>
            <button class="tool" aria-label="帮助"><svg><use href="#i-help"/></svg></button>
        </div>
        <div class="toolbar docked">
            <button class="tool" aria-label="置后"><svg><use href="#i-layers"/></svg></button>
            <button class="tool" aria-label="置前"><svg><use href="#i-layers"/></svg></button>
            <span class="sep"></span>
            <button class="tool" aria-label="左对齐"><svg><use href="#i-aleft"/></svg></button>
            <button class="tool" aria-label="右对齐"><svg><use href="#i-aright"/></svg></button>
            <button class="tool" aria-label="居中"><svg><use href="#i-acenter"/></svg></button>
            <span class="sep"></span>
            <button class="tool" aria-label="上对齐"><svg><use href="#i-abase"/></svg></button>
            <button class="tool" aria-label="下对齐"><svg><use href="#i-abase"/></svg></button>
            <button class="tool" aria-label="中对齐"><svg><use href="#i-abase"/></svg></button>
            <span class="sep"></span>
            <button class="tool" aria-label="行距"><svg><use href="#i-alist"/></svg></button>
            <button class="tool" aria-label="列距"><svg><use href="#i-acols"/></svg></button>
            <button class="tool" aria-label="平行"><svg><use href="#i-aslant"/></svg></button>
        </div>
    </div>

    <div class="toolbar floating floating-a">
        <span class="grip"></span>
        <button class="tool" aria-label="轴网"><svg><use href="#i-grid"/></svg></button>
        <button class="tool" aria-label="两点轴标"><svg><use href="#i-pile2"/></svg></button>
        <button class="tool" aria-label="单轴标注"><svg><use href="#i-pile1"/></svg></button>
        <button class="tool" aria-label="轴号"><svg><use href="#i-axisnum"/></svg></button>
        <span class="sep"></span>
        <button class="tool" aria-label="偏移墙"><svg><use href="#i-wallup"/></svg></button>
        <button class="tool" aria-label="墙厚"><svg><use href="#i-dimwall"/></svg></button>
        <button class="tool" aria-label="墙角"><svg><use href="#i-corner"/></svg></button>
        <button class="tool" aria-label="墙边"><svg><use href="#i-wallright"/></svg></button>
        <button class="tool" aria-label="门"><svg><use href="#i-door"/></svg></button>
        <button class="tool" aria-label="柱"><svg><use href="#i-column"/></svg></button>
        <span class="sep"></span>
        <button class="tool" aria-label="文字样式"><svg><use href="#i-textbrush"/></svg></button>
        <button class="tool" aria-label="单行文字"><svg><use href="#i-text"/></svg></button>
        <button class="tool" aria-label="多行文字"><svg><use href="#i-textlines"/></svg></button>
        <span class="sep"></span>
        <button class="tool" aria-label="门窗标注"><svg><use href="#i-dima"/></svg></button>
        <button class="tool" aria-label="逐点标注"><svg><use href="#i-dimb"/></svg></button>
        <button class="tool" aria-label="快速标注"><svg><use href="#i-dimc"/></svg></button>
        <button class="tool" aria-label="半径标注"><svg><use href="#i-dimcircle"/></svg></button>
        <button class="tool" aria-label="角度标注"><svg><use href="#i-slope"/></svg></button>
        <button class="tool" aria-label="尺寸还原"><svg><use href="#i-undo"/></svg></button>
        <span class="sep"></span>
        <button class="tool" aria-label="替换"><svg><use href="#i-swap"/></svg></button>
        <button class="tool" aria-label="自由复制"><svg><use href="#i-movered"/></svg></button>
        <button class="tool" aria-label="自由移动"><svg><use href="#i-move"/></svg></button>
        <button class="tool" aria-label="粘贴"><svg><use href="#i-paste"/></svg></button>
        <button class="close" aria-label="关闭工具栏">x</button>
    </div>

    <div class="toolbar floating floating-b">
        <span class="grip"></span>
        <button class="tool" aria-label="对象编辑"><svg><use href="#i-hand"/></svg></button>
        <button class="tool" aria-label="查找"><svg><use href="#i-find"/></svg></button>
        <span class="sep"></span>
        <button class="tool" aria-label="双跑楼梯"><svg><use href="#i-stairs"/></svg></button>
        <button class="tool" aria-label="电梯"><svg><use href="#i-lift"/></svg></button>
        <span class="sep"></span>
        <button class="tool" aria-label="索引符号"><svg><use href="#i-leadc"/></svg></button>
        <button class="tool" aria-label="索引图名"><svg><use href="#i-leadc"/></svg></button>
        <button class="tool" aria-label="剖切符号"><svg><use href="#i-section"/></svg></button>
        <button class="tool" aria-label="引出标注"><svg><use href="#i-ab"/></svg></button>
        <button class="tool" aria-label="做法标注"><svg><use href="#i-scalee"/></svg></button>
        <button class="tool" aria-label="箭头引注"><svg><use href="#i-leadera"/></svg></button>
        <button class="tool" aria-label="加折断线"><svg><use href="#i-break"/></svg></button>
        <button class="tool" aria-label="标高标注"><svg><use href="#i-level"/></svg></button>
        <button class="tool" aria-label="图名标注"><svg><use href="#i-abt"/></svg></button>
        <span class="sep"></span>
        <button class="tool" aria-label="图库管理"><svg><use href="#i-panel"/></svg></button>
        <button class="tool" aria-label="线图案"><svg><use href="#i-wave"/></svg></button>
        <button class="tool" aria-label="洁具"><svg><use href="#i-wc"/></svg></button>
        <button class="tool" aria-label="立面"><svg><use href="#i-hut"/></svg></button>
        <span class="sep"></span>
        <button class="tool" aria-label="局部隐藏"><svg viewBox="0 0 20 20"><use href="#i-eye"/><rect x="1" y="5" width="9" height="9" fill="#e60000" stroke="none"/></svg></button>
        <button class="tool" aria-label="编辑"><svg><use href="#i-note"/></svg></button>
        <button class="tool" aria-label="恢复可见"><svg><use href="#i-eye"/></svg></button>
        <span class="sep"></span>
        <button class="tool" aria-label="门窗"><svg><use href="#i-win4"/></svg></button>
        <button class="tool" aria-label="插入图框"><svg><use href="#i-sheet"/></svg></button>
        <button class="tool" aria-label="测量"><svg><use href="#i-ruler"/></svg></button>
        <button class="close" aria-label="关闭工具栏">x</button>
    </div>

    <main class="workspace">
        <aside class="palette">
            <div class="palette-title">建筑软...</div>
            <div class="palette-list">
                <div></div>
                <div></div>
                <div></div>
                <div></div>
                <div></div>
                <div>o</div>
            </div>
        </aside>

        <div class="canvas">
            <svg class="drawing" viewBox="208 583 3248 1341" preserveAspectRatio="xMinYMin slice">
                <defs>
                    <g id="pile"><circle r="23" fill="none" stroke="#12c02c" stroke-width="3"/><path d="M-24 0h48M0-24v48" stroke="#0f0" stroke-width="9"/></g>
                    <path id="tick" d="M-6 7L6-7" stroke="#d4e81c" stroke-width="5"/>
                    <g id="col"><rect x="-36" y="-35" width="73" height="73" fill="#5a5a5a" stroke="#ddd" stroke-width="3"/><rect x="-25" y="-24" width="51" height="51" fill="none" stroke="#f08484" stroke-width="7"/></g>
                    <g id="small"><rect x="-28" y="-28" width="57" height="57" fill="#5a5a5a" stroke="#ddd" stroke-width="3"/><rect x="-17" y="-17" width="35" height="35" fill="none" stroke="#f08484" stroke-width="6"/></g>
                    <g id="tall"><rect x="-28" y="-74" width="57" height="108" fill="#5a5a5a" stroke="#ddd" stroke-width="3"/><rect x="-17" y="-62" width="35" height="35" fill="none" stroke="#f08484" stroke-width="6"/></g>
                    <g id="dim-side">
                        <path class="yl" d="M-181-78V79M-190-66h45M-190 0h45M-190 67h45"/>
                        <use href="#tick" x="-181" y="-66"/><use href="#tick" x="-181" y="0"/><use href="#tick" x="-181" y="67"/>
                        <text class="d" transform="translate(-189 0) rotate(-90)">1200</text>
                        <text class="d" transform="translate(-189 67) rotate(-90)">1200</text>
                    </g>
                    <g id="dim-row">
                        <path class="yl" d="M-124 0h248M-115-38V8M0-10V8M115-38V8"/>
                        <use href="#tick" x="-115"/><use href="#tick"/><use href="#tick" x="115"/>
                        <text class="d" x="-91" y="-8">2078</text>
                        <text class="d" x="24" y="-8">2078</text>
                    </g>
                    <g id="footing">
                        <rect class="pale" x="-159" y="-110" width="320" height="221"/>
                        <use href="#col"/>
                        <use href="#pile" x="-115" y="-66"/><use href="#pile" x="115" y="-66"/>
                        <use href="#pile" x="-115" y="67"/><use href="#pile" x="115" y="67"/>
                        <use href="#dim-side"/>
                    </g>
                    <g id="dim-1200">
                        <path class="yl" d="M0-74V74M-42-67H8M-10 0H8M-42 66H8"/>
                        <use href="#tick" y="-67"/><use href="#tick"/><use href="#tick" y="66"/>
                        <text class="d" transform="translate(-8 0) rotate(-90)">1200</text>
                        <text class="d" transform="translate(-8 67) rotate(-90)">1200</text>
                    </g>
                    <g id="dim-1600">
                        <path class="yl" d="M0-94V52M-40-88H8M-10 0H8M-40 44H8"/>
                        <use href="#tick" y="-88"/><use href="#tick"/><use href="#tick" y="44"/>
                        <text class="d" transform="translate(-7 -10) rotate(-90)">1600</text>
                        <text class="d" transform="translate(-7 48) rotate(-90)">800</text>
                    </g>
                </defs>

                <!-- axes -->
                <path class="axis" d="M628 812V1924M1125 812V1924M1622 812V1924M2118 812V1924M2307 812V1924M2753 812V1626M3217 812V1626M2701 1626V1924M208 1163H3456M208 1378H3456M208 1626H3456M208 1875H3456"/>
                <g class="bubble">
                    <circle cx="628" cy="770" r="42"/><circle cx="1125" cy="770" r="42"/><circle cx="1622" cy="770" r="42"/><circle cx="2118" cy="770" r="42"/><circle cx="2307" cy="770" r="42"/><circle cx="2753" cy="770" r="42"/><circle cx="3217" cy="770" r="42"/>
                </g>
                <g class="axisno"><text x="2118" y="794">9</text><text x="2307" y="794">10</text><text x="3217" y="794">12</text></g>
                <path class="gl" d="M208 859H3222M3217 852V950"/>
                <text class="d" x="346" y="850">9000</text>
                <text class="d" x="2954" y="850">9000</text>

                <!-- outline -->
                <path class="wl" d="M208 1052H3262V1743H2817V1924M2817 1749H2787L2797 1924"/>
                <path class="pale" d="M2709 1715H3262M2795 1715V1924"/>

                <!-- upper row -->
                <path class="pale" d="M242 1052V1273H208"/>
                <use href="#pile" x="199" y="1096"/><use href="#pile" x="199" y="1229"/>
                <use href="#dim-1200" x="270" y="1163"/>
                <text class="tag" x="205" y="1264">D1</text>
                <path class="pale" d="M645 1273H710M645 1297H690"/>
                <path class="axis" d="M560 1096H695V1229H560"/>
                <use href="#col" x="628" y="1163"/>
                <use href="#pile" x="560" y="1096"/><use href="#pile" x="695" y="1096"/><use href="#pile" x="695" y="1229"/>
                <text class="lv" x="608" y="1110">401.65</text>
                <text class="tag" x="671" y="1265">XZD1</text>
                <text class="d" x="645" y="1291">200</text>
                <use href="#pile" x="1622" y="1096"/>
                <use href="#dim-1200" x="1693" y="1163"/>
                <text class="lv" x="1521" y="1117">401.65</text>
                <use href="#pile" x="2080" y="1096"/><use href="#pile" x="2080" y="1229"/><use href="#pile" x="2195" y="1163"/>
                <text class="lv" x="2150" y="1096">401.65</text>
                <path class="pale" d="M2709 1052V1273H2798V1052"/>
                <use href="#pile" x="2753" y="1096"/>
                <use href="#dim-1200" x="2828" y="1163"/>
                <text class="tag" x="2729" y="1264">XZD4</text>
                <path class="pale" d="M3173 1052V1273H3262"/>
                <use href="#small" x="3217" y="1163"/>
                <use href="#pile" x="3217" y="1096"/><use href="#pile" x="3217" y="1229"/>
                <use href="#dim-1200" x="3290" y="1163"/>
                <text class="lv" x="3102" y="1212">401.65</text>
                <text class="tag" x="3193" y="1264">XZD4</text>

                <!-- middle row -->
                <use href="#footing" x="628" y="1626"/><use href="#dim-row" x="628" y="1762"/>
                <use href="#footing" x="1125" y="1626"/><use href="#dim-row" x="1125" y="1762"/>
                <use href="#footing" x="1622" y="1626"/><use href="#dim-row" x="1622" y="1762"/>
                <use href="#footing" x="2118" y="1626"/>
                <path class="yl" d="M1995 1498H2243M2004 1488V1529M2118 1488V1506M2234 1488V1529"/>
                <use href="#tick" x="2004" y="1498"/><use href="#tick" x="2118" y="1498"/><use href="#tick" x="2234" y="1498"/>
                <text class="d" x="2028" y="1490">2078</text><text class="d" x="2143" y="1490">2078</text>
                <text class="lv" x="642" y="1571">401.25</text>
                <text class="lv" x="1032" y="1562">401.25</text>
                <text class="lv" x="1530" y="1562">401.25</text>
                <text class="lv" x="2026" y="1562">401.25</text>
                <text class="tag" x="705" y="1729">XZD2a</text>
                <text class="tag" x="1221" y="1729">XZD2</text>
                <text class="tag" x="1703" y="1729">XZD2b</text>
                <text class="tag" x="2196" y="1729">XZD2b</text>
                <text class="mark" x="1519" y="1834">2l</text>

                <!-- opening K2 -->
                <path class="yl" d="M2298 1515H2414M2307 1507V1541M2405 1507V1541M2497 1609H2548M2541 1600V1636"/>
                <use href="#tick" x="2307" y="1515"/><use href="#tick" x="2405" y="1515"/><use href="#tick" x="2541" y="1609"/><use href="#tick" x="2541" y="1627"/>
                <text class="d" x="2324" y="1507">1780</text>
                <path class="pale" d="M2405 1549H2488V1609H2405ZL2405 1609L2431 1566L2488 1549"/>
                <text class="d" x="2452" y="1603">K2</text>
                <text class="d" transform="translate(2533 1642) rotate(-90)">310</text>

                <!-- right footings -->
                <rect class="pale" x="2709" y="1494" width="89" height="221"/>
                <use href="#pile" x="2753" y="1538"/><use href="#pile" x="2753" y="1670"/>
                <use href="#tall" x="2753" y="1626"/>
                <use href="#dim-1600" x="2825" y="1626"/>
                <text class="lv" x="2626" y="1556">401.65</text>
                <text class="tag" x="2729" y="1551">XZD4</text>
                <path class="gl" d="M2701 1668V1737M2753 1690V1737M2692 1728H2762M2695 1735L2707 1721M2747 1735L2759 1721"/>
                <text class="d" x="2703" y="1721">950</text>
                <rect class="pale" x="3173" y="1494" width="89" height="221"/>
                <use href="#pile" x="3217" y="1538"/><use href="#pile" x="3217" y="1670"/>
                <use href="#tall" x="3217" y="1626"/>
                <use href="#dim-1600" x="3286" y="1626"/>
                <text class="lv" x="3102" y="1583">401.65</text>
                <text class="tag" x="3193" y="1707">XZD4</text>

                <!-- lower row -->
                <rect class="pale" x="2196" y="1764" width="221" height="220"/>
                <path class="axis" d="M2240 1924V1808H2373V1924"/>
                <use href="#col" x="2307" y="1874"/>
                <use href="#pile" x="2240" y="1808"/><use href="#pile" x="2373" y="1808"/><use href="#pile" x="2240" y="1941"/><use href="#pile" x="2373" y="1941"/>
                <use href="#dim-1200" x="2445" y="1875"/>
                <text class="lv" x="2263" y="1811">401.65</text>
                <use href="#small" x="2701" y="1875"/>
                <path class="yl" d="M2838 1866V1924"/><use href="#tick" x="2838" y="1875"/>

                <!-- UCS icon -->
                <path class="ucs" d="M245 1762V1887H369M234 1874H257V1898H234ZM248 1724L263 1738L278 1724M263 1738V1753M378 1855L408 1884M408 1855L378 1884"/>
            </svg>

            <div class="view-label">[−][俯视][二维线框]</div>
            <div class="viewcube">
                <svg viewBox="0 0 112 260">
                    <circle cx="116" cy="109" r="96" fill="none" stroke="#343434" stroke-width="23"/>
                    <rect x="75" y="61" width="60" height="95" fill="#c4c4c4"/>
                    <path d="M92 124h20M112 96v28" stroke="#777" stroke-width="3"/>
                    <text x="0" y="122" font-size="34" fill="#a0a0a0">西</text>
                </svg>
                <button class="wcs">WCS</button>
            </div>
            <div class="command-line">
                <div class="command-tools">
                    <span class="grip"></span>
                    <button aria-label="关闭">✕</button>
                    <button aria-label="自定义"><svg viewBox="0 0 20 20"><path d="M5 1l1 4-3 2-3-2c0 5 4 6 6 5l9 9c2 1 4-1 3-3l-9-8c1-4-1-6-4-7z" fill="#c8c8c8"/></svg></button>
                </div>
                <label class="command-input">
                    <span class="prompt">&gt;_</span>
                    <i class="caret"></i>
                    <input type="text" placeholder="键入命令" aria-label="命令">
                    <i class="caret caret-up"></i>
                </label>
            </div>
        </div>
    </main>

    <div class="layout-tabs">
        <a href="#">布局1</a>
        <a href="#">布局2</a>
        <button aria-label="新建布局">+</button>
    </div>

    <footer class="statusbar">
        <div class="cell"><button class="scale">比例 1:100<i class="caret"></i></button></div>
        <div class="cell end coords">3219.2258, -132350.1164, 0.0000</div>
        <div class="cell end"><button class="model">模型</button></div>
        <div class="cell end"><button aria-label="栅格"><svg><use href="#s-grid"/></svg></button><button aria-label="捕捉"><svg><use href="#s-dots"/></svg></button><i class="caret"></i></div>
        <div class="cell"><button aria-label="推断约束"><svg><use href="#s-infer"/></svg></button></div>
        <div class="cell"><button aria-label="动态输入"><svg><use href="#s-dyn"/></svg></button></div>
        <div class="cell"><button aria-label="正交"><svg><use href="#s-ortho"/></svg></button><button aria-label="极轴"><svg><use href="#s-polar"/></svg></button><i class="caret"></i><button aria-label="等轴测"><svg><use href="#s-iso"/></svg></button><i class="caret"></i></div>
        <div class="cell"><button aria-label="对象捕捉追踪"><svg><use href="#s-track"/></svg></button><button aria-label="对象捕捉"><svg><use href="#s-snap"/></svg></button><i class="caret"></i></div>
        <div class="cell"><button aria-label="线宽"><svg><use href="#s-lwt"/></svg></button></div>
        <div class="cell"><button aria-label="透明度"><svg><use href="#s-trans"/></svg></button></div>
        <div class="cell"><button aria-label="选择循环"><svg><use href="#s-cycle"/></svg></button></div>
        <div class="cell end"><button aria-label="三维对象捕捉"><svg><use href="#s-cubes"/></svg></button><i class="caret"></i></div>
        <div class="cell end"><button aria-label="动态UCS"><svg><use href="#s-ucs"/></svg></button><button aria-label="选择过滤"><svg><use href="#s-cube"/></svg></button><i class="caret"></i><button aria-label="小控件"><svg><use href="#s-gizmo"/></svg></button><i class="caret"></i></div>
        <div class="cell end"><button aria-label="注释可见性"><svg><use href="#s-annvis"/></svg></button><button aria-label="自动缩放"><svg><use href="#s-annauto"/></svg></button><button aria-label="注释比例"><svg><use href="#s-ann"/></svg></button><button class="ratio">1:1 / 100%</button><i class="caret"></i></div>
        <div class="cell"><button aria-label="切换工作空间"><svg><use href="#s-gear"/></svg></button><i class="caret"></i></div>
        <div class="cell end"><button aria-label="注释监视器"><svg><use href="#s-plus"/></svg></button></div>
        <div class="cell"><button aria-label="单位"><svg><use href="#s-rule"/></svg></button><button class="units">小数</button><i class="caret"></i></div>
        <div class="cell end"><button aria-label="快捷特性"><svg><use href="#s-calc"/></svg></button></div>
        <div class="cell"><button aria-label="锁定用户界面"><svg><use href="#s-lock"/></svg></button><i class="caret"></i></div>
        <div class="cell end tight"><button aria-label="隔离对象"><svg><use href="#s-shapes"/></svg></button><button aria-label="硬件加速"><svg><use href="#s-hw"/></svg></button><button aria-label="线型"><svg><use href="#s-line1"/></svg></button><button aria-label="填充"><svg><use href="#s-hatch"/></svg></button><button aria-label="基线"><svg><use href="#s-line2"/></svg></button><button aria-label="编组"><svg><use href="#s-line3"/></svg></button></div>
        <div class="cell end"><button aria-label="图形性能"><svg><use href="#s-perf"/></svg></button></div>
        <div class="cell"><button aria-label="通知"><svg><use href="#s-msg"/></svg></button></div>
    </footer>

    <div class="desktop-edge bottom"></div>

    <div class="taskbar">
        <div class="apps">
            <button class="app" aria-label="Edge"><svg viewBox="0 0 60 60"><defs><linearGradient id="eg" x1="0" y1="0" x2="1" y2="0"><stop offset="0" stop-color="#1f9fdf"/><stop offset="1" stop-color="#5fe06a"/></linearGradient></defs><circle cx="30" cy="30" r="29" fill="#0f74cf"/><path d="M2 24C6-6 56-6 59 27c1 12-11 17-22 12 8-8-1-20-12-19C13 20 4 22 2 24z" fill="url(#eg)"/><path d="M28 30c-3 14 12 22 26 15-6 10-18 15-28 14C10 54 11 36 28 30z" fill="#0c4f9f"/><path d="M29 26c-4 12 8 21 24 18 5-2 8-7 7-14 0 10-12 13-22 9 4-6-1-14-9-13z" fill="#d6e6ee"/></svg></button>
            <button class="app running" aria-label="文件资源管理器"><svg viewBox="0 0 60 60"><path d="M3 7h20l5 5h29v38H3z" fill="#fcd25a"/><path d="M3 7h20l5 5-5 5H3z" fill="#d99a10"/><path d="M12 53V36c0-5 2-7 6-7h24c4 0 6 2 6 7v17H39V41H21v12z" fill="#3f94dc"/></svg></button>
            <button class="app" aria-label="iTunes"><svg viewBox="0 0 60 60"><defs><linearGradient id="it" x1="1" y1="0" x2="0" y2="1"><stop offset="0" stop-color="#ec3a7e"/><stop offset="1" stop-color="#4a7df0"/></linearGradient></defs><rect width="60" height="60" fill="#fff"/><circle cx="30" cy="30" r="17" fill="none" stroke="url(#it)" stroke-width="2"/><path d="M25 38V22l13-3v15" fill="none" stroke="#7d4fd2" stroke-width="3"/><ellipse cx="23" cy="38" rx="4" ry="3" fill="#6f57dc"/><ellipse cx="36" cy="35" rx="4" ry="3" fill="#a048c0"/></svg></button>
            <button class="app" aria-label="浏览器"><svg viewBox="0 0 60 60"><circle cx="29" cy="31" r="25" fill="#58b531" stroke="#fff" stroke-width="2"/><path d="M15 33h28c0-18-26-19-28 0 0 18 22 19 28 8" fill="none" stroke="#fff" stroke-width="7"/><path d="M5 58C-4 32 30 0 54 2c2 4 0 8-4 12 1-4 1-6-1-7C28 10 4 34 9 56z" fill="#6fb952"/></svg></button>
            <button class="app running" aria-label="AutoCAD"><svg viewBox="0 0 60 60"><rect width="60" height="60" fill="#f9e2da"/><text x="9" y="51" font-size="60" font-weight="700" fill="#b3161f">A</text></svg></button>
        </div>
        <div class="tray">
            <button aria-label="显示隐藏的图标"><svg viewBox="0 0 40 40"><path d="M4 27l16-16 16 16"/></svg></button>
            <button aria-label="麦克风"><svg viewBox="0 0 40 40"><rect x="11" y="1" width="18" height="25" rx="2" fill="#000"/><path d="M7 22c0 13 26 13 26 0M20 31v7M12 38h16"/></svg></button>
            <button aria-label="微信"><svg viewBox="0 0 40 40"><ellipse cx="16" cy="15" rx="15" ry="12" fill="#1fd068" stroke="none"/><path d="M6 23l-1 8 9-5z" fill="#1fd068" stroke="none"/><circle cx="11" cy="11" r="2" fill="#0a6a32" stroke="none"/><circle cx="20" cy="11" r="2" fill="#0a6a32" stroke="none"/><ellipse cx="28" cy="25" rx="11" ry="9" fill="#f4f4ec" stroke="none"/><circle cx="25" cy="23" r="1.500" fill="#555" stroke="none"/><circle cx="32" cy="23" r="1.500" fill="#555" stroke="none"/></svg></button>
            <button aria-label="网络"><svg viewBox="0 0 40 40"><path d="M4 36C4 18 18 6 34 6M12 36c0-14 10-22 22-22M20 36c0-8 6-14 14-14"/><circle cx="31" cy="33" r="4" fill="#000" stroke="none"/></svg></button>
            <button aria-label="电池"><svg viewBox="0 0 40 40"><rect x="10" y="13" width="28" height="18" fill="#000"/><path d="M1 9h9v7H1zM5 16v15h6M3 5v4M8 5v4M39 19v6"/></svg></button>
            <button aria-label="音量"><svg viewBox="0 0 40 40"><path d="M1 15h7l8-8v26l-8-8H1zM21 15c3 3 3 7 0 10M27 11c6 5 6 13 0 18M33 6c8 8 8 20 0 28"/></svg></button>
            <button class="pen" aria-label="手写笔"><svg viewBox="0 0 40 40"><path d="M28 2l6 4-14 24-7 4 1-8zM10 22c-8 4-8 14-3 16s7-6 10-12M30 16c8 0 8 6 0 10"/></svg></button>
            <button class="ime">英</button>
            <div class="clock">23:28<br>2023/5/</div>
        </div>
    </div>

    <div class="recorder">00:00</div>
    <p class="caption">如何制作dat数据<br>导入南方CASS软件</p>
</body>
</html>
```
FILE: styles.css
```
* {
    box-sizing: border-box;
}
body {
    margin: 0;
    height: 100vh;
    display: flex;
    flex-direction: column;
    overflow: hidden;
    position: relative;
    background: #363636;
    color: #f2f2f2;
    font-family: "Noto Sans CJK SC", "Open Sans", sans-serif;
    font-size: 30px;
    line-height: 40px;
}
button, input, select {
    font: inherit;
    color: inherit;
    background: none;
    border: 0;
    padding: 0;
    margin: 0;
}
button {
    flex-shrink: 0;
}
a {
    color: inherit;
    text-decoration: none;
}
svg {
    display: block;
}
.sprite {
    display: none;
}
.sprite text {
    fill: #111;
    stroke: none;
}
.sprite .w {
    fill: #fff;
}
.caret {
    display: inline-block;
    width: 0;
    height: 0;
    border: 7px solid transparent;
    border-top: 10px solid #f4f4f4;
    border-bottom: 0;
    flex-shrink: 0;
}
.caret-right {
    border: 9px solid transparent;
    border-left: 8px solid #fff;
    border-right: 0;
}
.caret-up {
    border: 10px solid transparent;
    border-bottom: 11px solid #111;
    border-top: 0;
}

.desktop-edge {
    flex: 0 0 5px;
    background: linear-gradient(90deg, #2f6fb8 0%, #2a6db4 36%, #b9c4b4 40%, #8fa8a0 60%, #8a97a0 72%, #0d4a80 80%, #0b4477 100%);
}
.desktop-edge.bottom {
    flex-basis: 16px;
    border-top: 2px solid #dfeaf0;
    background: linear-gradient(90deg, #33708f 0%, #35799a 45%, #5d8288 52%, #4a7a80 60%, #3d5a66 75%, #46413f 80%, #1a4a68 86%, #0d5478 100%);
}

/* title bar */
.titlebar {
    flex: 0 0 75px;
    display: flex;
    align-items: flex-end;
    background: #fdfdfd;
}
.quick-access {
    width: 460px;
    height: 60px;
    display: flex;
    align-items: center;
    gap: 16px;
    padding-left: 4px;
    background: linear-gradient(#a4a4a4, #929292);
    border: 2px solid #6f6f6f;
    border-width: 2px 2px 0 0;
    flex-shrink: 0;
}
.qa {
    width: 44px;
    height: 44px;
}
.qa svg, .ic svg {
    width: 40px;
    height: 40px;
    stroke: #444a55;
    stroke-width: 1;
}
.qa.dim {
    opacity: .6;
}
.qa.more {
    width: 26px;
}
.qa.more svg {
    width: 26px;
    fill: #fff;
    stroke: #fff;
    stroke-width: 2;
}
.window-title {
    flex: 1;
    margin: 0;
    padding: 0 0 19px 352px;
    font-size: 32px;
    font-weight: 400;
    color: #111;
    white-space: nowrap;
}
.window-title span {
    margin-left: 34px;
}
.infocenter {
    width: 1115px;
    height: 60px;
    display: flex;
    align-items: center;
    gap: 12px;
    padding-left: 8px;
    background: linear-gradient(#a6a6a6, #989898);
    border: 2px solid #777;
    border-bottom: 0;
    flex-shrink: 0;
}
.search {
    width: 452px;
    height: 56px;
    padding: 0 8px;
    background: #707070;
    border: 2px solid #3d3d3d;
    font-size: 28px;
    font-style: italic;
}
.search::placeholder {
    color: #bdbdbd;
    opacity: 1;
}
.ic {
    width: 44px;
    height: 44px;
}
.login {
    margin-right: 140px;
    color: #fff;
}
.help {
    margin-left: 40px;
}
.window-buttons {
    width: 244px;
    height: 60px;
    display: flex;
    gap: 92px;
    padding: 6px 0 0 104px;
    overflow: hidden;
    flex-shrink: 0;
}
.window-buttons svg {
    width: 26px;
    height: 32px;
    fill: none;
    stroke: #111;
    stroke-width: 3;
}

/* ribbon */
.ribbon-tabs {
    flex: 0 0 50px;
    display: flex;
    align-items: flex-end;
    margin-left: -64px;
    background: #505050;
    border-top: 2px solid #333;
    border-bottom: 2px solid #2c2c2c;
    color: #cfcfcf;
    white-space: nowrap;
}
.ribbon-tabs a {
    height: 44px;
    padding: 0 25px 0 24px;
    line-height: 40px;
}
.ribbon-tabs .active {
    margin-bottom: -2px;
    height: 46px;
    padding: 0 22px;
    background: #666;
    border: 2px solid #2c2c2c;
    border-bottom: 0;
    border-radius: 6px 6px 0 0;
    color: #fff;
    line-height: 38px;
}
.minimize {
    align-self: center;
    width: 34px;
    height: 20px;
    margin: 0 14px 0 56px;
    border-radius: 5px;
    background: #eee;
    color: #333;
    font-size: 14px;
    line-height: 18px;
}
.ribbon-tabs .caret {
    align-self: center;
}
.ribbon {
    flex: 0 0 248px;
    display: flex;
    background: linear-gradient(#4c4c4c, #353636);
    border-bottom: 3px solid #6e7775;
    white-space: nowrap;
}
.panel {
    display: flex;
    flex-direction: column;
    background: #595959;
    border-right: 2px solid #3c3c3c;
    flex-shrink: 0;
}
.panel-body {
    flex: 0 0 200px;
    display: flex;
    padding: 7px 12px;
}
.panel-title {
    flex: 1;
    background: #4b4b4b;
    line-height: 40px;
}
.panel-recorder {
    width: 340px;
}
.panel-recorder .panel-title {
    margin-left: -6px;
}
.panel-title .caret {
    margin-bottom: 4px;
    border-width: 12px 9px 0;
}
.stack {
    flex-direction: column;
    padding: 7px 6px 7px 20px;
}
.line {
    display: flex;
    gap: 26px;
    padding-left: 12px;
}
.line .row {
    gap: 18px;
}
.line .row:first-child {
    margin-right: 10px;
}
.row {
    display: flex;
    align-items: center;
    gap: 14px;
    height: 62px;
}
.row svg {
    width: 38px;
    height: 40px;
    fill: none;
    stroke-width: 1;
}
.row .play {
    width: 32px;
    height: 28px;
}
.macro {
    position: relative;
    width: 312px;
    height: 55px;
    margin-top: 2px;
    background: #ebebeb;
    border: 2px solid #d0d0d0;
}
.macro select {
    width: 100%;
    height: 100%;
    appearance: none;
    color: #444;
}
.macro::after {
    content: "";
    position: absolute;
    right: 20px;
    top: 16px;
    width: 10px;
    height: 10px;
    border: solid #555;
    border-width: 0 3px 3px 0;
    transform: rotate(45deg);
    pointer-events: none;
}
.panel-custom {
    width: 438px;
}
.panel-custom .panel-body {
    padding-left: 2px;
}
.panel-apps {
    width: 582px;
}
.panel-apps .panel-body {
    padding-left: 8px;
}
.panel-std {
    width: 236px;
}
.panel-touch {
    width: 106px;
    border-right: 0;
}
.panel-touch .panel-body {
    padding: 7px 2px;
}
.panel-touch .panel-title {
    padding-left: 20px;
    border-bottom: 4px solid #1c5269;
}
.big {
    width: 100px;
    text-align: center;
}
.big svg {
    width: 74px;
    height: 76px;
    margin: 4px auto 10px;
}
.panel-apps .wide {
    width: 128px;
}
.rows {
    margin-left: 10px;
}
.panel-std .rows {
    margin-left: 0;
}

/* file tabs */
.file-tabs {
    flex: 0 0 60px;
    display: flex;
    background: #363636;
}
.file-tab {
    height: 60px;
    background: linear-gradient(#6f6f6f, #5a5a5a);
    border-radius: 0 30px 0 0;
}
.file-tab.first {
    width: 186px;
    background: linear-gradient(#555, #454545);
}
.file-tab.current {
    width: 320px;
    display: flex;
    justify-content: space-between;
    padding: 14px 42px 0 27px;
    clip-path: polygon(3% 0, 94% 0, 100% 100%, 0 100%);
}
.file-tab button {
    color: #3c3c3c;
    font-size: 24px;
}
.new-tab {
    width: 54px;
    height: 56px;
    margin-left: 8px;
    padding-top: 12px;
    background: #4c4c4c;
    border-radius: 0 0 12px 20px;
    color: #d0d0d0;
    font-size: 40px;
}

/* toolbars */
.dock {
    flex: 0 0 145px;
    display: flex;
    flex-direction: column;
    align-items: flex-start;
    gap: 6px;
    padding-top: 12px;
    background: #5a5a5a;
    overflow: hidden;
}
.toolbar {
    display: flex;
    align-items: center;
    height: 59px;
    background: #555;
    border: 2px solid #353535;
}
.docked {
    padding-left: 2px;
    margin-left: -34px;
}
.docked .tool:last-child {
    margin-right: 6px;
}
.tool {
    width: 42px;
    height: 42px;
    margin-right: 16px;
    background: #c2c2c2;
}
.tool svg {
    width: 42px;
    height: 42px;
    fill: none;
    stroke: #151515;
    stroke-width: 1.2px;
}
.sep {
    width: 2px;
    height: 48px;
    margin-right: 10px;
    background: #333;
    border-right: 1px solid #999;
}
.grip {
    width: 10px;
    height: 28px;
    background: radial-gradient(#222 1px, transparent 2px) 0 0 / 5px 5px;
}
.floating {
    position: absolute;
    z-index: 2;
    height: 58px;
}
.floating .grip {
    margin: 0 10px 12px 5px;
}
.floating-a {
    left: 186px;
    top: 341px;
}
.floating-b {
    left: 255px;
    top: 489px;
    padding-left: 2px;
}
.close {
    align-self: flex-start;
    width: 24px;
    height: 54px;
    margin-left: -10px;
    padding-bottom: 24px;
    background: #4b4b4b;
    color: #ddd;
    font-size: 22px;
    line-height: 28px;
}

/* workspace */
.workspace {
    flex: 1;
    display: flex;
    min-height: 0;
    background: #585858;
}
.palette {
    flex: 0 0 202px;
    margin-right: 6px;
    padding: 6px 0 20px;
    display: flex;
    flex-direction: column;
    overflow: hidden;
}
.palette-title {
    flex: 0 0 65px;
    margin-left: -22px;
    background: #4b4b4b;
    line-height: 54px;
    white-space: nowrap;
}
.palette-list {
    flex: 1;
    display: flex;
    flex-direction: column;
    background: #ededed;
    color: #222;
}
.palette-list div {
    flex: 121 1 0;
    border-bottom: 3px solid #b9b9b9;
    background: #f0f0ef;
}
.palette-list div:nth-child(1) {
    flex-grow: 402;
    border-bottom-color: #777;
    background: #ebebeb;
}
.palette-list div:nth-child(2) {
    flex-grow: 266;
}
.palette-list div:nth-child(3) {
    flex-grow: 194;
}
.palette-list div:nth-child(4) {
    flex-grow: 154;
}
.palette-list div:nth-child(6) {
    border-bottom: 0;
    margin-left: -8px;
}
.canvas {
    flex: 1;
    position: relative;
    overflow: hidden;
    background: #000;
}
.drawing {
    width: 100%;
    height: 100%;
}
.drawing text {
    font-family: Roboto, "Liberation Sans", sans-serif;
    font-weight: 300;
}
.axis {
    fill: none;
    stroke: #909090;
    stroke-width: 3px;
}
.wl, .ucs {
    fill: none;
    stroke: #e4e4e4;
    stroke-width: 3px;
}
.pale {
    fill: none;
    stroke: #c6cc88;
    stroke-width: 3px;
}
.yl {
    fill: none;
    stroke: #b6c42a;
    stroke-width: 3px;
}
.gl {
    fill: none;
    stroke: #1fc41f;
    stroke-width: 4px;
}
.d {
    font-size: 30px;
    fill: #ededed;
}
.lv {
    font-size: 42px;
    fill: #b01518;
}
.tag {
    font-size: 32px;
    fill: #a566c4;
}
.mark {
    font-size: 44px;
    fill: #a8527a;
}
.bubble {
    fill: none;
    stroke: #f0f0f0;
    stroke-width: 3px;
}
.drawing .axisno text {
    font-family: "Liberation Serif", serif;
    font-size: 70px;
    text-anchor: middle;
    fill: #f0f0f0;
}
.view-label {
    position: absolute;
    left: 6px;
    top: 11px;
}
.viewcube {
    position: absolute;
    top: 105px;
    right: 0;
    width: 112px;
    height: 330px;
    overflow: hidden;
}
.viewcube svg {
    width: 112px;
    height: 260px;
}
.wcs {
    position: absolute;
    left: 65px;
    top: 275px;
    width: 90px;
    height: 40px;
    padding-left: 6px;
    border-radius: 8px;
    background: #8e8e94;
    color: #505058;
    font-size: 26px;
    line-height: 36px;
    text-align: left;
}
.command-line {
    position: absolute;
    left: 688px;
    right: 518px;
    bottom: 2px;
    height: 65px;
    display: flex;
}
.command-tools {
    width: 134px;
    display: flex;
    align-items: center;
    gap: 18px;
    padding-left: 8px;
    background: linear-gradient(#5c5c5c, #353535);
    border-radius: 6px 0 0 6px;
    color: #ddd;
}
.command-tools .grip {
    height: 44px;
    background: radial-gradient(#aaa 1px, transparent 2px) 0 0 / 6px 8px;
}
.command-tools svg {
    width: 38px;
    height: 38px;
}
.command-input {
    flex: 1;
    display: flex;
    align-items: center;
    gap: 10px;
    padding: 0 10px 0 12px;
    background: rgba(255, 255, 255, .69);
    border-radius: 6px;
}
.prompt {
    width: 36px;
    height: 34px;
    border: 2px solid #8b8f96;
    border-radius: 4px;
    background: #a9adb6;
    color: #333;
    font-size: 22px;
    font-weight: 700;
    line-height: 28px;
    text-align: center;
}
.command-input .caret:not(.caret-up) {
    border-top-color: #555;
}
.command-input input {
    flex: 1;
    padding-left: 10px;
    font-size: 32px;
    font-style: italic;
    color: #333;
}
.command-input input::placeholder {
    color: #686868;
    opacity: 1;
}

/* layout tabs */
.layout-tabs {
    flex: 0 0 51px;
    display: flex;
    gap: 4px;
    background: #363636;
    color: #b9b9b9;
    white-space: nowrap;
}
.layout-tabs a {
    width: 138px;
    height: 44px;
    padding-left: 28px;
    background: #555;
    border-radius: 0 0 16px 16px;
    line-height: 42px;
}
.layout-tabs a:first-child {
    width: 108px;
    padding-left: 3px;
}
.layout-tabs button {
    width: 56px;
    height: 42px;
    margin-left: 4px;
    background: #4c4c4c;
    border-radius: 16px 0 16px 0;
    color: #ccc;
    font-size: 38px;
    line-height: 38px;
}

/* status bar */
.statusbar {
    flex: 0 0 68px;
    display: flex;
    padding-left: 102px;
    overflow: hidden;
    font-weight: 500;
    white-space: nowrap;
}
.cell {
    display: flex;
    align-items: center;
    height: 65px;
    background: #4e4e4e;
    border: 2px solid #7b7b7b;
    border-width: 2px 0 2px 1px;
    flex-shrink: 0;
}
.cell.end {
    border-right-width: 1px;
    margin-right: 2px;
}
.cell button {
    width: 62px;
    height: 60px;
    color: #c8c8c8;
}
.cell svg {
    width: 42px;
    height: 40px;
    margin: 0 auto;
    fill: none;
    stroke: #c8c8c8;
    stroke-width: 1.2px;
}
.cell .caret {
    margin: 0 14px 0 6px;
    border-width: 12px 8px 0;
}
.cell .scale {
    width: 172px;
    padding-left: 3px;
    color: #fff;
    font-size: 28px;
    text-align: left;
}
.scale .caret {
    margin: 0 0 4px 8px;
}
.coords {
    width: 453px;
    padding-left: 15px;
    color: #fff;
    font-size: 27px;
}
.cell .model {
    width: 68px;
    color: #fff;
}
.cell .ratio {
    width: 140px;
    color: #fff;
    font-size: 28px;
}
.cell .units {
    width: 145px;
    padding-left: 12px;
    text-align: left;
    color: #fff;
}
.cell.tight button {
    width: 60px;
}

/* taskbar */
.taskbar {
    flex: 0 0 100px;
    display: flex;
    justify-content: space-between;
    background: linear-gradient(90deg, #d5e3e9 0%, #d3e7ea 45%, #cfdfe8 68%, #d8dedd 80%, #cfdfe6 100%);
    color: #111;
}
.apps {
    display: flex;
    gap: 22px;
    margin-left: -15px;
}
.app {
    width: 102px;
    height: 100px;
    border-bottom: 6px solid transparent;
    padding-top: 6px;
}
.app svg {
    width: 60px;
    height: 60px;
    margin: 0 auto;
}
.app.running {
    border-bottom-color: #0b72d0;
}
.tray {
    display: flex;
    align-items: center;
    gap: 40px;
    white-space: nowrap;
}
.tray svg {
    width: 40px;
    height: 40px;
    fill: none;
    stroke: #111;
    stroke-width: 2.5px;
}
.pen {
    margin-left: 6px;
}
.ime {
    margin-left: -4px;
    font-size: 40px;
}
.clock {
    width: 108px;
    margin-left: -12px;
    overflow: hidden;
    font-size: 32px;
    line-height: 46px;
    text-align: right;
}

/* overlays */
.recorder {
    position: absolute;
    z-index: 3;
    top: 194px;
    right: 72px;
    width: 128px;
    height: 128px;
    border: 6px solid #f2f8ff;
    border-radius: 50%;
    background: linear-gradient(200deg, #2f83f4, #66c4fa);
    box-shadow: 0 6px 10px rgba(0, 0, 0, .3);
    font-size: 32px;
    line-height: 112px;
    text-align: center;
}
.caption {
    position: absolute;
    z-index: 4;
    top: 723px;
    left: 0;
    right: 0;
    margin: 0;
    color: #f9ea0a;
    font-size: 334px;
    font-weight: 700;
    line-height: 340px;
    text-align: center;
    white-space: nowrap;
    -webkit-text-stroke: 44px #000;
    paint-order: stroke fill;
    pointer-events: none;
}
```
